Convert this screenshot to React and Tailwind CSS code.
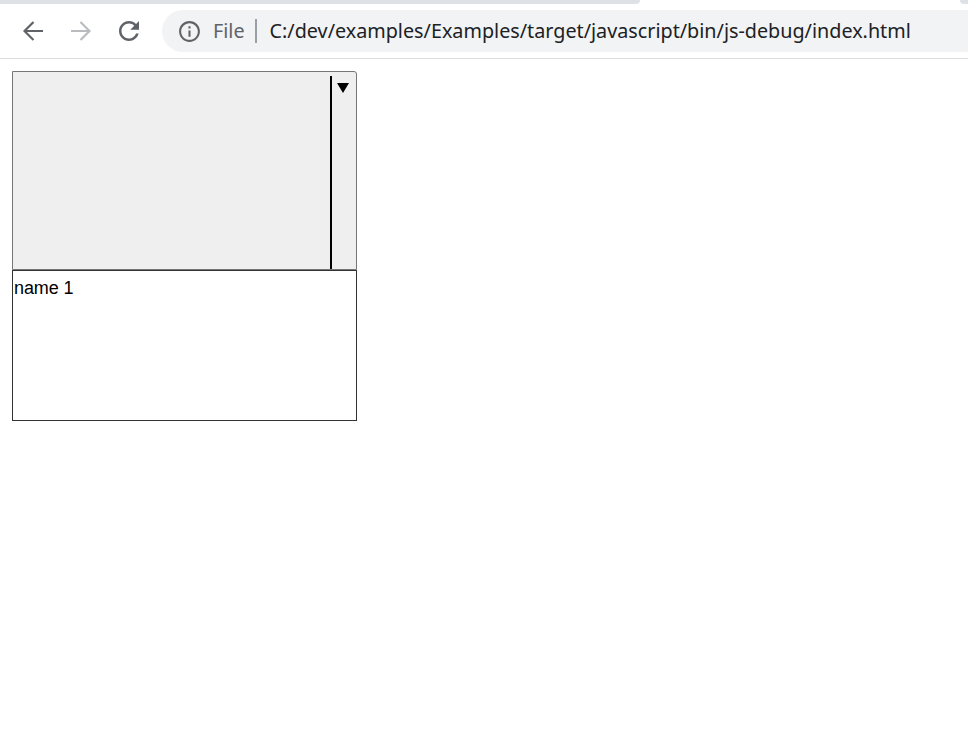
const BackIcon = ({ className }) => (
  <svg width="30" height="30" viewBox="0 0 24 24" fill="none" stroke="currentColor" strokeWidth="1.7" className={className}>
    <path d="M20 12H5.6M12.4 4.8 5.2 12l7.2 7.2" />
  </svg>
)

const ForwardIcon = ({ className }) => (
  <svg width="30" height="30" viewBox="0 0 24 24" fill="none" stroke="currentColor" strokeWidth="1.7" className={className}>
    <path d="M4 12h14.4M11.6 4.8l7.2 7.2-7.2 7.2" />
  </svg>
)

const ReloadIcon = ({ className }) => (
  <svg width="30" height="30" viewBox="0 0 24 24" fill="currentColor" className={className}>
    <path d="M17.65 6.35C16.2 4.9 14.21 4 12 4c-4.42 0-7.99 3.58-7.99 8s3.57 8 7.99 8c3.73 0 6.84-2.55 7.73-6h-2.08c-.82 2.33-3.04 4-5.65 4-3.31 0-6-2.69-6-6s2.69-6 6-6c1.66 0 3.14.69 4.22 1.78L13 11h7V4l-2.35 2.35z" />
  </svg>
)

const InfoIcon = ({ className }) => (
  <svg width="25" height="25" viewBox="0 0 24 24" fill="currentColor" className={className}>
    <path d="M11 7h2v2h-2zm0 4h2v6h-2zm1-9C6.48 2 2 6.48 2 12s4.48 10 10 10 10-4.48 10-10S17.52 2 12 2zm0 18c-4.41 0-8-3.59-8-8s3.59-8 8-8 8 3.59 8 8-3.59 8-8 8z" />
  </svg>
)

const App = () => {
  return (
    <div className="flex h-[752px] w-[968px] flex-col overflow-hidden bg-white font-['Liberation_Sans',sans-serif]">
      <div className="flex h-1 shrink-0 justify-between">
        <div className="h-1 w-[640px] rounded-br-[4px] bg-[#dee1e6]" />
        <div className="h-1 w-[8px] rounded-bl-[8px] bg-[#dee1e6]" />
      </div>
      <div className="flex h-[55px] shrink-0 items-center gap-[18px] border-b border-[#dadce0] pl-[18px]">
        <BackIcon className="text-[#5f6368]" />
        <ForwardIcon className="text-[#b9bbbe]" />
        <ReloadIcon className="text-[#5f6368]" />
        <div className="flex h-[42px] flex-1 items-center rounded-l-[21px] bg-[#f1f3f4] pl-[15px] font-['Noto_Sans',sans-serif] text-[19.75px]">
          <InfoIcon className="text-[#5f6368]" />
          <span className="ml-[11px] text-[#5f6368]">File</span>
          <div className="ml-[10px] h-[24px] w-[2px] bg-[#9aa0a6]" />
          <span className="ml-[13px] text-[#202124]">C:/dev/examples/Examples/target/javascript/bin/js-debug/index.html</span>
        </div>
      </div>
      <div className="pl-[12px] pt-[12px]">
        <div className="flex h-[199px] w-[345px] justify-end rounded-tr-[3px] border border-[#767676] bg-[#efefef] pt-[4px]">
          <div className="flex h-[193px] w-[26px] justify-center border-l-2 border-black pr-[2px]">
            <span className="mt-[7px] h-0 w-0 border-x-[6px] border-t-[10px] border-x-transparent border-t-black" />
          </div>
        </div>
        <div className="h-[151px] w-[345px] border border-[#333333] text-[18px] leading-[21px] tracking-[-0.1px] text-black">
          <div className="pl-px pt-[7px]">name 1</div>
        </div>
      </div>
    </div>
  )
}

export default App
